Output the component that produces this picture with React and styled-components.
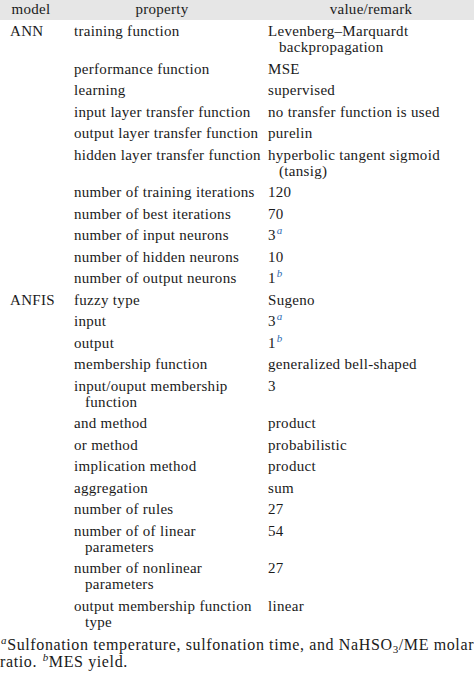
import React from 'react'
import styled, { createGlobalStyle } from 'styled-components'

const Global = createGlobalStyle`
  html, body {
    margin: 0;
    padding: 0;
    background: #fff;
    overflow: hidden;
  }
  body {
    font-family: "Liberation Serif", "Times New Roman", serif;
    color: #1a1a1a;
  }
`

const Page = styled.div`
  width: 474px;
  height: 679px;
  overflow: hidden;
`

const Columns = styled.div`
  display: grid;
  grid-template-columns: 74px 194px 1fr;
  font-size: 15px;
  line-height: 16px;
  letter-spacing: 0.3px;
`

const HeadRow = styled(Columns)`
  background: #e6e6e6;
  height: 20px;
  align-items: center;
`

const HeadCell = styled.div`
  text-align: center;
  padding-bottom: 2px;
  padding-right: ${({ $pull }) => $pull || 0}px;
`

const Cell = styled.div`
  padding: 3px 0 2.5px;
  white-space: nowrap;
`

const ModelCell = styled(Cell)`
  padding-left: 10px;
`

const Wrap = styled.span`
  display: block;
  padding-left: 11px;
`

const Sup = styled.sup`
  font-style: italic;
  font-size: 11px;
  line-height: 0;
  vertical-align: 6px;
  margin-left: 1px;
  color: ${({ $link }) => ($link ? '#2f6db3' : 'inherit')};
`

const Sub = styled.sub`
  font-size: 11px;
  line-height: 0;
  vertical-align: -3px;
`

const Note = styled.div`
  font-size: 16px;
  line-height: 17px;
  letter-spacing: 0.62px;
  white-space: nowrap;
  margin-top: 4px;
`

const rows = [
  ['ANN', ['training function'], ['Levenberg\u2013Marquardt', 'backpropagation']],
  ['', ['performance function'], ['MSE']],
  ['', ['learning'], ['supervised']],
  ['', ['input layer transfer function'], ['no transfer function is used']],
  ['', ['output layer transfer function'], ['purelin']],
  ['', ['hidden layer transfer function'], ['hyperbolic tangent sigmoid', '(tansig)']],
  ['', ['number of training iterations'], ['120']],
  ['', ['number of best iterations'], ['70']],
  ['', ['number of input neurons'], ['3'], 'a'],
  ['', ['number of hidden neurons'], ['10']],
  ['', ['number of output neurons'], ['1'], 'b'],
  ['ANFIS', ['fuzzy type'], ['Sugeno']],
  ['', ['input'], ['3'], 'a'],
  ['', ['output'], ['1'], 'b'],
  ['', ['membership function'], ['generalized bell-shaped']],
  ['', ['input/ouput membership', 'function'], ['3']],
  ['', ['and method'], ['product']],
  ['', ['or method'], ['probabilistic']],
  ['', ['implication method'], ['product']],
  ['', ['aggregation'], ['sum']],
  ['', ['number of rules'], ['27']],
  ['', ['number of of linear', 'parameters'], ['54']],
  ['', ['number of nonlinear', 'parameters'], ['27']],
  ['', ['output membership function', 'type'], ['linear']],
]

const Lines = ({ lines }) => (
  <>
    {lines[0]}
    {lines.slice(1).map((l, i) => (
      <Wrap key={i}>{l}</Wrap>
    ))}
  </>
)

export default function App() {
  return (
    <Page>
      <Global />
      <HeadRow>
        <HeadCell $pull={12}>model</HeadCell>
        <HeadCell $pull={18}>property</HeadCell>
        <HeadCell>value/remark</HeadCell>
      </HeadRow>
      <Columns>
        {rows.map(([model, prop, value, sup], i) => (
          <React.Fragment key={i}>
            <ModelCell>{model}</ModelCell>
            <Cell>
              <Lines lines={prop} />
            </Cell>
            <Cell>
              <Lines lines={value} />
              {sup && <Sup $link>{sup}</Sup>}
            </Cell>
          </React.Fragment>
        ))}
      </Columns>
      <Note>
        <Sup>a</Sup>Sulfonation temperature, sulfonation time, and NaHSO<Sub>3</Sub>/ME molar
        <br />
        ratio. <Sup>b</Sup>MES yield.
      </Note>
    </Page>
  )
}
